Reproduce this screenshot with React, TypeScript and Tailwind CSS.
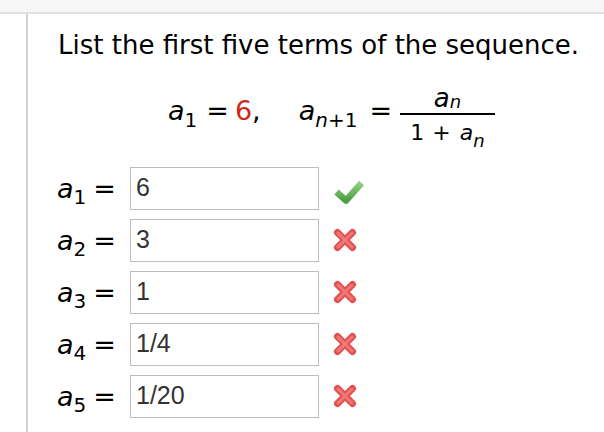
import React from 'react';

const mathFont = "font-['DejaVu_Sans',sans-serif]";

const Sub = ({ children, size = 'text-[20px]', offset = 'top-[7px]' }: { children: React.ReactNode; size?: string; offset?: string }) => (
  <span className={`relative inline-block not-italic ${size} ${offset}`}>{children}</span>
);

const Check = () => (
  <svg width="32" height="26" viewBox="0 0 32 26">
    <defs>
      <linearGradient id="chk" x1="0" y1="0" x2="0" y2="1">
        <stop offset="0" stopColor="#8fd07f" />
        <stop offset="1" stopColor="#4f9e45" />
      </linearGradient>
    </defs>
    <path d="M3.5 13 L13 21.5 L28.5 4" fill="none" stroke="url(#chk)" strokeWidth="6.5" strokeLinejoin="round" />
  </svg>
);

const Cross = () => (
  <svg width="24" height="24" viewBox="0 0 24 24">
    <path d="M4.5 4.5 L19.5 19.5 M19.5 4.5 L4.5 19.5" stroke="#e35050" strokeWidth="7" strokeLinecap="round" />
    <path d="M5 5 L19 19 M19 5 L5 19" stroke="#f27878" strokeWidth="3" strokeLinecap="round" />
  </svg>
);

const rows = [
  { n: '1', value: '6', ok: true },
  { n: '2', value: '3', ok: false },
  { n: '3', value: '1', ok: false },
  { n: '4', value: '1/4', ok: false },
  { n: '5', value: '1/20', ok: false },
];

export default function App() {
  return (
    <div className="w-[604px] h-[432px] bg-white overflow-hidden flex flex-col">
      <div className="h-[14px] shrink-0 bg-[#f7f7f7] border-b-2 border-[#e2e2e2]" />
      <div className="flex flex-1">
        <div className="w-[26px] shrink-0" />
        <div className="flex-1 border-l-2 border-[#d2d2d2] pl-[30px]">
          <h1 className="mt-[16px] text-[26px] leading-[30px] text-black font-['DejaVu_Sans',sans-serif]">
            List the first five terms of the sequence.
          </h1>

          {/* recurrence */}
          <div className={`mt-[25px] pl-[110px] flex items-start text-black ${mathFont}`}>
            <span className="mt-[12px] text-[27px] leading-none">
              <i>a</i>
              <Sub>1</Sub>
            </span>
            <span className="mt-[12px] ml-[9px] text-[27px] leading-none">=</span>
            <span className="mt-[12px] ml-[6px] text-[27px] leading-none text-[#d0281e]">6</span>
            <span className="mt-[12px] text-[27px] leading-none">,</span>
            <span className="mt-[12px] ml-[38px] text-[27px] leading-none">
              <i>a</i>
              <Sub>
                <i>n</i>+1
              </Sub>
            </span>
            <span className="mt-[12px] ml-[12px] text-[27px] leading-none">=</span>
            <div className="ml-[8px] w-[95px] flex flex-col items-center">
              <span className="text-[26px] leading-none h-[26px] whitespace-nowrap">
                <i>a</i>
                <Sub size="text-[18px]" offset="top-[1px]">
                  <i>n</i>
                </Sub>
              </span>
              <div className="mt-[1.5px] h-[2px] w-full bg-black" />
              <span className="mt-[7px] text-[22px] leading-none h-[22px] whitespace-nowrap">
                1<span className="ml-[8px] mr-[9px]">+</span>
                <i>a</i>
                <Sub size="text-[18px]" offset="top-[7px]">
                  <i>n</i>
                </Sub>
              </span>
            </div>
          </div>

          {/* answers */}
          <div className="mt-[23px] flex flex-col gap-[9px]">
            {rows.map((r) => (
              <div key={r.n} className="flex items-center h-[43px]">
                <div className={`w-[72px] flex items-center text-black ${mathFont}`}>
                  <span className="text-[27px] leading-none ml-[-1px]">
                    <i>a</i>
                    <Sub offset="top-[6px]">{r.n}</Sub>
                  </span>
                  <span className="ml-[7px] text-[27px] leading-none">=</span>
                </div>
                <div className="w-[189px] h-[43px] border border-[#bdbdbd] bg-white px-[5px] flex items-center text-[25px] text-[#333] font-['Liberation_Sans',Arial,sans-serif]">
                  {r.value}
                </div>
                <div className="ml-[14px] w-[32px] flex items-center">
                  {r.ok ? (
                    <div className="mt-[8px]">
                      <Check />
                    </div>
                  ) : (
                    <Cross />
                  )}
                </div>
              </div>
            ))}
          </div>
        </div>
      </div>
    </div>
  );
}
